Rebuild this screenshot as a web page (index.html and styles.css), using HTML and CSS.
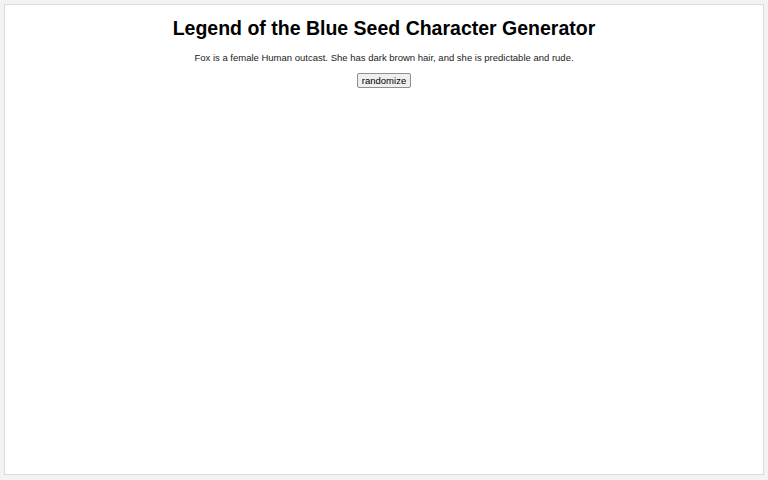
FILE: index.html
```html
<!DOCTYPE html>
<html>
<head>
<meta charset="utf-8">
<title>Legend of the Blue Seed Character Generator</title>
<link rel="stylesheet" href="styles.css">
</head>
<body>
<main class="card">
  <h1 class="title">Legend of the Blue Seed Character Generator</h1>
  <p class="summary">Fox is a female Human outcast. She has dark brown hair, and she is predictable and rude.</p>
  <button class="randomize" type="button">randomize</button>
</main>
</body>
</html>
```
FILE: styles.css
```css
html, body {
  height: 100%;
}

body {
  margin: 0;
  padding: 4px 4px 5px 4px;
  box-sizing: border-box;
  background: #f3f3f3;
  font-family: "Liberation Sans", Arial, sans-serif;
  display: flex;
}

.card {
  flex: 1;
  background: #fff;
  border: 1px solid #dcdcdc;
  display: flex;
  flex-direction: column;
  align-items: center;
  padding-top: 14px;
}

.title {
  margin: 0;
  font-size: 19.5px;
  font-weight: bold;
  color: #000;
  line-height: 18px;
}

.summary {
  margin: 15px 0 0;
  font-size: 9.5px;
  line-height: 11px;
  color: #222;
}

.randomize {
  margin-top: 10px;
  font-family: "Liberation Sans", Arial, sans-serif;
  font-size: 9.5px;
  line-height: 13px;
  padding: 0 4px;
  color: #000;
  background: #efefef;
  border: 1px solid #8f8f8f;
  border-radius: 2px;
}
```
